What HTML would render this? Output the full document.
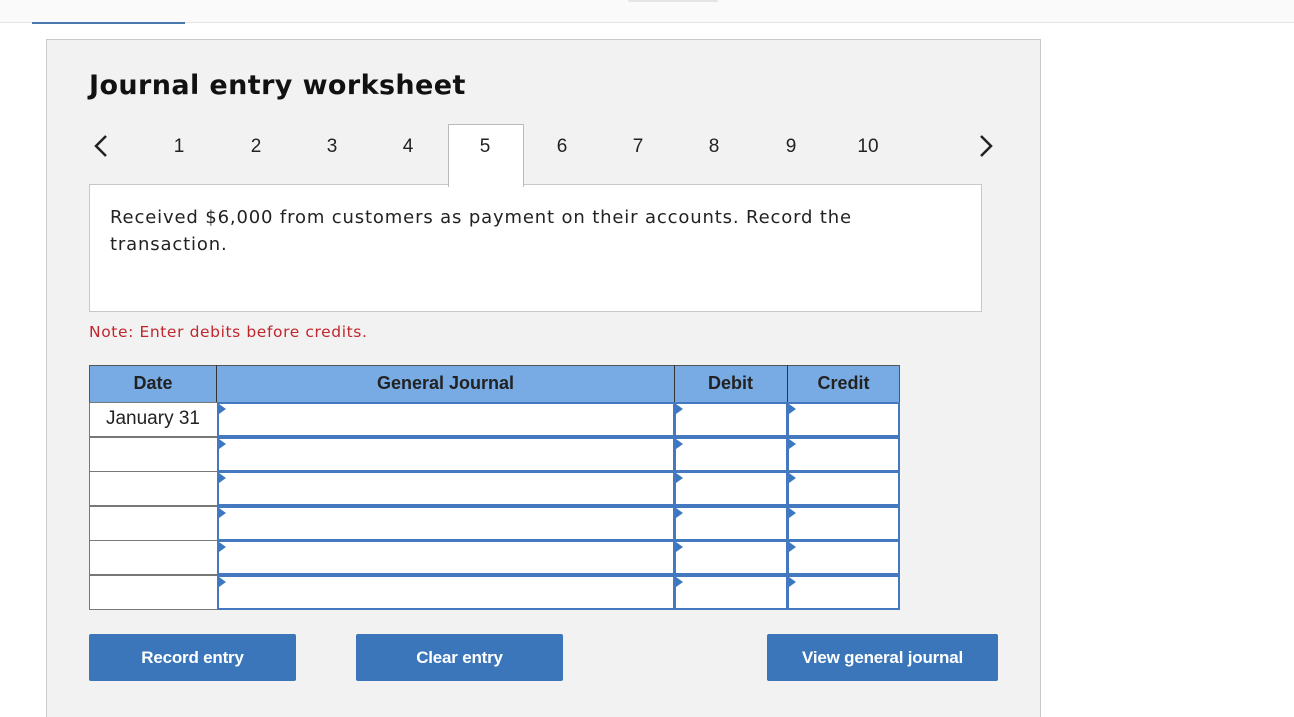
<!DOCTYPE html>
<html><head><style>
html,body{margin:0;width:1294px;height:717px;overflow:hidden}
body{background:#fff;position:relative;font-family:"Liberation Sans",sans-serif}
.a{position:absolute}
.v{font-family:"DejaVu Sans","Liberation Sans",sans-serif}
.tab{position:absolute;top:136px;font-size:19px;color:#222;width:40px;text-align:center}
.btn{position:absolute;top:634px;height:47px;background:#3a76b9;color:#fff;font-weight:bold;font-size:17px;display:flex;align-items:center;justify-content:center;border-radius:2px;letter-spacing:-0.2px}
.cell{position:absolute;box-sizing:border-box}
.inp{position:absolute;box-sizing:border-box;border:2px solid #4479bf;background:#fff}
.tri{position:absolute;width:0;height:0;border-top:5px solid transparent;border-bottom:5px solid transparent;border-left:7px solid #3b78c4}
</style></head><body>
<div class="a" style="left:0;top:0;width:1294px;height:22px;background:#fafafa;border-bottom:1px solid #e6e6e6"></div>
<div class="a" style="left:32px;top:22px;width:153px;height:2px;background:#4a78ad"></div>
<div class="a" style="left:628px;top:0;width:90px;height:2px;background:#e4e4e4;border-radius:0 0 6px 6px"></div>
<div class="a" style="left:46px;top:39px;width:993px;height:690px;background:#f2f2f2;border:1px solid #c9c9c9"></div>
<div class="a v" style="left:89px;top:70px;font-size:27px;font-weight:bold;color:#111;white-space:nowrap;letter-spacing:0.4px">Journal entry worksheet</div>
<svg class="a" style="left:92px;top:133px" width="18" height="26"><path d="M14 3 L4 13 L14 23" stroke="#222" stroke-width="2.5" fill="none"/></svg>
<svg class="a" style="left:977px;top:133px" width="18" height="26"><path d="M4 3 L14 13 L4 23" stroke="#222" stroke-width="2.5" fill="none"/></svg>
<div class="a" style="left:448px;top:124px;width:74px;height:62px;background:#fff;border:1px solid #bbb;border-bottom:none;z-index:2"></div>
<div class="tab" style="left:159px">1</div><div class="tab" style="left:236px">2</div><div class="tab" style="left:312px">3</div><div class="tab" style="left:388px">4</div><div class="tab" style="left:465px;z-index:3">5</div><div class="tab" style="left:542px">6</div><div class="tab" style="left:618px">7</div><div class="tab" style="left:694px">8</div><div class="tab" style="left:771px">9</div><div class="tab" style="left:848px">10</div>
<div class="a" style="left:89px;top:184px;width:891px;height:126px;background:#fff;border:1px solid #c8c8c8"></div>
<div class="a v" style="left:110px;top:204px;width:790px;font-size:18px;line-height:27px;color:#222;z-index:3;letter-spacing:0.85px">Received $6,000 from customers as payment on their accounts. Record the transaction.</div>
<div class="a v" style="left:89px;top:323px;font-size:15.5px;color:#c0262d;white-space:nowrap;letter-spacing:0.6px">Note: Enter debits before credits.</div>
<div class="cell" style="left:89px;top:365px;width:811px;height:38px;background:#78abe3;border:1px solid #555"></div>
<div class="cell" style="left:216px;top:365px;width:1px;height:38px;background:#333"></div>
<div class="cell" style="left:674px;top:365px;width:1px;height:38px;background:#333"></div>
<div class="cell" style="left:787px;top:365px;width:1px;height:38px;background:#333"></div>
<div class="a" style="left:89px;top:373px;width:128px;text-align:center;font-weight:bold;font-size:18px;color:#222">Date</div>
<div class="a" style="left:217px;top:373px;width:457px;text-align:center;font-weight:bold;font-size:18px;color:#222">General Journal</div>
<div class="a" style="left:674px;top:373px;width:113px;text-align:center;font-weight:bold;font-size:18px;color:#222">Debit</div>
<div class="a" style="left:787px;top:373px;width:113px;text-align:center;font-weight:bold;font-size:18px;color:#222">Credit</div>
<div id="rows"></div>
<script>
var ys=[402,437,471,506,540,575],h="";
ys.forEach(function(y,i){
 h+='<div class="cell" style="left:89px;top:'+y+'px;width:129px;height:35px;background:#fff;border:1px solid #777"></div>';
 h+='<div class="inp" style="left:217px;top:'+y+'px;width:458px;height:35px"></div><div class="tri" style="left:219px;top:'+(y+2)+'px"></div>';
 h+='<div class="inp" style="left:674px;top:'+y+'px;width:114px;height:35px"></div><div class="tri" style="left:676px;top:'+(y+2)+'px"></div>';
 h+='<div class="inp" style="left:787px;top:'+y+'px;width:113px;height:35px"></div><div class="tri" style="left:789px;top:'+(y+2)+'px"></div>';
});
h+='<div class="a" style="left:89px;top:408px;width:128px;text-align:center;font-size:19px;color:#222">January 31</div>';
document.getElementById("rows").innerHTML=h;
</script>
<div class="btn" style="left:89px;width:207px">Record entry</div>
<div class="btn" style="left:356px;width:207px">Clear entry</div>
<div class="btn" style="left:767px;width:231px">View general journal</div>
</body></html>
